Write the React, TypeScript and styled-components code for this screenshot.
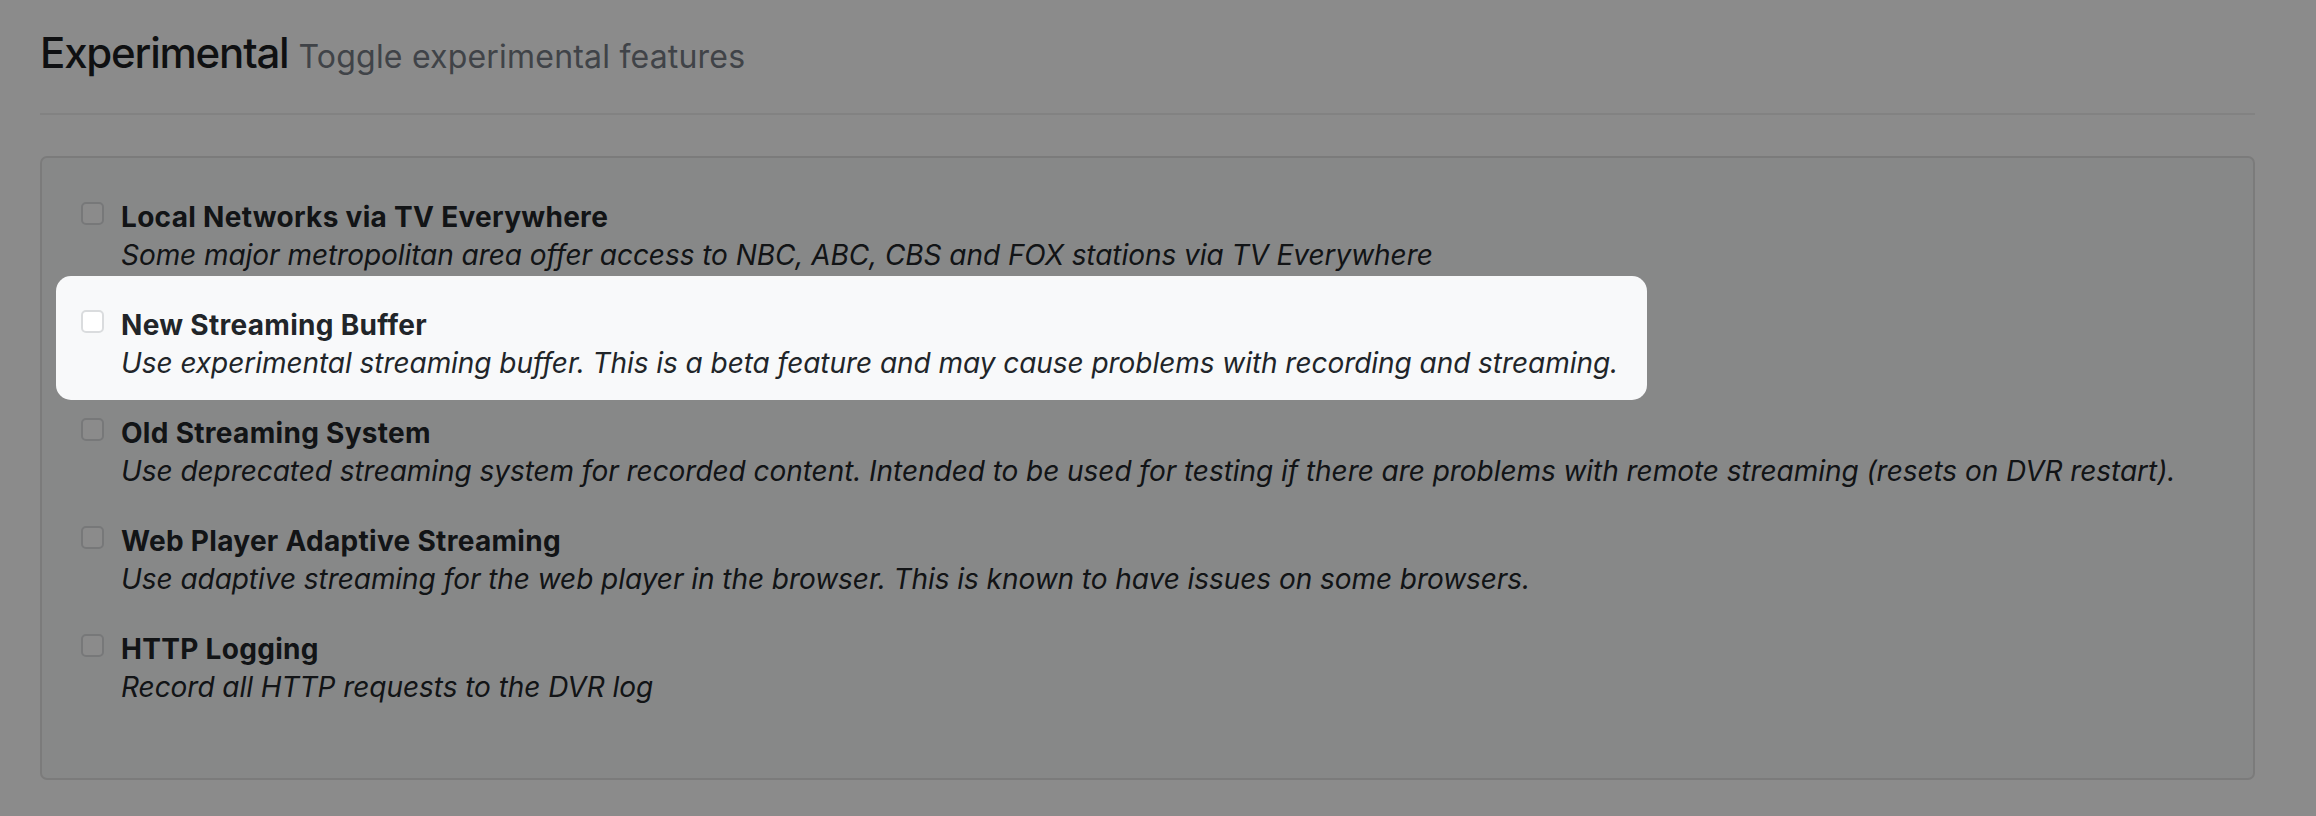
import styled, { createGlobalStyle } from 'styled-components';

const GlobalStyle = createGlobalStyle`
    html, body {
        height: 100%;
    }

    html {
        overflow: hidden;
        background: #ffffff;
    }

    body {
        margin: 0;
        font-family: Inter, "Noto Sans", "Liberation Sans", sans-serif;
        color: #212529;
    }
`;

const Page = styled.div`
    box-sizing: border-box;
    min-height: 100vh;
    padding: 28px 61px 0 40px;
`;

const Header = styled.h3`
    margin: 0;
    font-size: 42px;
    font-weight: 500;
    line-height: 1.2;
    letter-spacing: -1.2px;
    color: #1d1f22;
`;

const Subtitle = styled.small`
    font-size: 32px;
    font-weight: 400;
    letter-spacing: 0.2px;
    color: #767c84;
`;

const Divider = styled.hr`
    margin: 35px 0 41px;
    border: 0;
    border-top: 2px solid #eeeeee;
`;

const Card = styled.div`
    background: #f8f9fa;
    border: 2px solid #e2e2e2;
    border-radius: 7px;
    padding: 40px 40px 40px 39px;
`;

const Row = styled.div`
    margin-bottom: 32px;
`;

const Label = styled.label`
    position: relative;
    display: inline-flex;
    align-items: flex-start;
    gap: 17px;
    font-size: 28px;
    line-height: 38px;
`;

const Box = styled.span`
    flex: none;
    width: 23px;
    height: 23px;
    margin-top: 4px;
    box-sizing: border-box;
    background: #ffffff;
    border: 2px solid #dadcde;
    border-radius: 5px;
`;

const Text = styled.span`
    display: flex;
    flex-direction: column;
`;

const Title = styled.span`
    font-weight: 700;
    letter-spacing: 0.3px;
`;

const Description = styled.span`
    font-style: italic;
    letter-spacing: -0.05px;
`;

const Spotlight = styled.span`
    position: absolute;
    top: -30px;
    bottom: -18px;
    left: -25px;
    right: -29px;
    border-radius: 15px;
    box-shadow: 0 0 0 5000px rgba(0, 0, 0, 0.455);
    pointer-events: none;
    z-index: 10;
`;

const features = [
    {
        title: 'Local Networks via TV Everywhere',
        description: 'Some major metropolitan area offer access to NBC, ABC, CBS and FOX stations via TV Everywhere',
    },
    {
        title: 'New Streaming Buffer',
        description: 'Use experimental streaming buffer. This is a beta feature and may cause problems with recording and streaming.',
        highlighted: true,
    },
    {
        title: 'Old Streaming System',
        description: 'Use deprecated streaming system for recorded content. Intended to be used for testing if there are problems with remote streaming (resets on DVR restart).',
    },
    {
        title: 'Web Player Adaptive Streaming',
        description: 'Use adaptive streaming for the web player in the browser. This is known to have issues on some browsers.',
    },
    {
        title: 'HTTP Logging',
        description: 'Record all HTTP requests to the DVR log',
    },
];

function App() {
    return (
        <>
            <GlobalStyle />
            <Page>
                <Header>
                    Experimental <Subtitle>Toggle experimental features</Subtitle>
                </Header>
                <Divider />
                <Card>
                    {features.map((f) => (
                        <Row key={f.title}>
                            <Label>
                                <Box />
                                <Text>
                                    <Title>{f.title}</Title>
                                    <Description>{f.description}</Description>
                                </Text>
                                {f.highlighted && <Spotlight />}
                            </Label>
                        </Row>
                    ))}
                </Card>
            </Page>
        </>
    );
}

export default App;
